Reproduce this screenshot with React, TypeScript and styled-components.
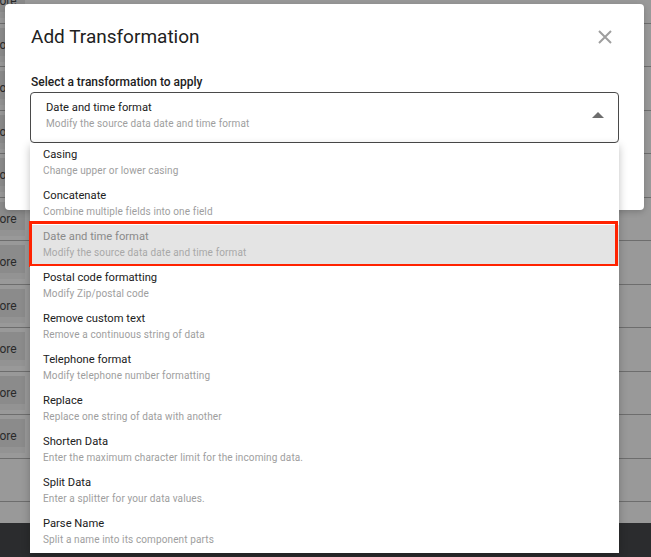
import styled, { createGlobalStyle } from "styled-components";

const GlobalStyle = createGlobalStyle`
  html, body {
    margin: 0;
    padding: 0;
  }
  body {
    font-family: Roboto, "Noto Sans", "Liberation Sans", sans-serif;
    -webkit-font-smoothing: antialiased;
  }
  * {
    box-sizing: border-box;
  }
`;

const transformations = [
  { title: "Casing", descr: "Change upper or lower casing" },
  { title: "Concatenate", descr: "Combine multiple fields into one field" },
  { title: "Date and time format", descr: "Modify the source data date and time format" },
  { title: "Postal code formatting", descr: "Modify Zip/postal code" },
  { title: "Remove custom text", descr: "Remove a continuous string of data" },
  { title: "Telephone format", descr: "Modify telephone number formatting" },
  { title: "Replace", descr: "Replace one string of data with another" },
  { title: "Shorten Data", descr: "Enter the maximum character limit for the incoming data." },
  { title: "Split Data", descr: "Enter a splitter for your data values." },
  { title: "Parse Name", descr: "Split a name into its component parts" },
];

const selected = "Date and time format";

const App = () => {
  return (
    <>
      <GlobalStyle />
      <Page>
        <Backdrop>
          <Rows>
            {Array.from({ length: 13 }).map((_, i) => (
              <Row key={i}>{i <= 10 && <MoreButton>More</MoreButton>}</Row>
            ))}
          </Rows>
          <Footer />
        </Backdrop>

        <Modal>
          <Header>
            <Title>Add Transformation</Title>
            <CloseButton aria-label="Close">
              <svg width="14" height="14" viewBox="0 0 14 14">
                <path d="M1 1 L13 13 M13 1 L1 13" stroke="#9e9e9e" strokeWidth="2" />
              </svg>
            </CloseButton>
          </Header>
          <Body>
            <Label>Select a transformation to apply</Label>
            <SelectWrap>
              <SelectBox>
                <div>
                  <OptionTitle>Date and time format</OptionTitle>
                  <OptionDescr>Modify the source data date and time format</OptionDescr>
                </div>
                <Caret />
              </SelectBox>
              <Menu>
                {transformations.map((t) => (
                  <MenuItem key={t.title} $active={t.title === selected}>
                    <OptionTitle>{t.title}</OptionTitle>
                    <OptionDescr>{t.descr}</OptionDescr>
                  </MenuItem>
                ))}
              </Menu>
            </SelectWrap>
          </Body>
        </Modal>
      </Page>
    </>
  );
};
export default App;

const Page = styled.div`
  position: relative;
  width: 651px;
  height: 557px;
  overflow: hidden;
  background: #999999;
`;

const Backdrop = styled.div`
  display: flex;
  flex-direction: column;
  height: 100%;
`;

const Rows = styled.div`
  flex: 1;
  overflow: hidden;
  display: flex;
  flex-direction: column;
  margin-top: -20px;
`;

const Row = styled.div`
  flex: 0 0 43.5px;
  border-bottom: 1px solid #6d6d6d;
  padding-top: 4px;
`;

const MoreButton = styled.div`
  width: 44px;
  height: 34px;
  margin-left: -19px;
  padding: 6px 0 0 8px;
  background: #8b8b8b;
  border-bottom: 6px solid #939393;
  color: #2a2a2a;
  font-size: 12px;
  line-height: 22px;
`;

const Footer = styled.div`
  flex: 0 0 34px;
  background: #2b2c2e;
`;

const Modal = styled.div`
  position: absolute;
  top: 4px;
  left: 5px;
  width: 639px;
  height: 206px;
  background: #fff;
  border-radius: 4px;
  box-shadow: 0 2px 6px rgba(0, 0, 0, 0.2);
`;

const Header = styled.div`
  display: flex;
  align-items: center;
  justify-content: space-between;
  padding: 21px 26px 0 26px;
`;

const Title = styled.h2`
  margin: 0;
  font-size: 19px;
  line-height: 24px;
  font-weight: 400;
  color: #212121;
`;

const CloseButton = styled.button`
  display: flex;
  align-items: center;
  justify-content: center;
  width: 24px;
  height: 24px;
  padding: 0;
  margin-right: 1px;
  margin-top: -1px;
  border: none;
  background: none;
  cursor: pointer;
`;

const Body = styled.div`
  padding: 0 25px;
  margin-top: 25px;
`;

const Label = styled.div`
  padding-left: 1px;
  font-size: 12px;
  line-height: 16px;
  font-weight: 500;
  color: #212121;
  margin-bottom: 2px;
`;

const SelectWrap = styled.div`
  position: relative;
`;

const SelectBox = styled.div`
  display: flex;
  align-items: center;
  justify-content: space-between;
  height: 51px;
  padding: 0 14px 4px 15px;
  border: 1px solid #4a4a4a;
  border-radius: 4px;
`;

const Caret = styled.span`
  width: 0;
  height: 0;
  border-left: 6px solid transparent;
  border-right: 6px solid transparent;
  border-bottom: 6px solid #6d6d6d;
  margin-bottom: 1px;
`;

const OptionTitle = styled.div`
  font-size: 11.2px;
  line-height: 16px;
  color: #212121;
`;

const OptionDescr = styled.div`
  font-size: 10px;
  line-height: 14px;
  letter-spacing: 0.12px;
  color: #9e9e9e;
  margin-top: 1px;
`;

const Menu = styled.div`
  position: absolute;
  top: 100%;
  left: 0;
  right: 0;
  background: #fff;
  border-radius: 0 0 4px 4px;
  box-shadow: 0 3px 8px rgba(0, 0, 0, 0.25);
  z-index: 2;
`;

const MenuItem = styled.div<{ $active?: boolean }>`
  position: relative;
  height: 41px;
  padding: 4px 13px 0;
  background: ${(p) => (p.$active ? "#e4e4e4" : "#fff")};

  ${OptionTitle} {
    color: ${(p) => (p.$active ? "#8a8a8a" : "#212121")};
  }
  ${OptionDescr} {
    color: ${(p) => (p.$active ? "#a8a8a8" : "#9e9e9e")};
  }

  &::after {
    content: "";
    display: ${(p) => (p.$active ? "block" : "none")};
    position: absolute;
    top: -4px;
    bottom: -1px;
    left: -1px;
    right: 1px;
    border: 3px solid #ff2200;
    pointer-events: none;
  }
`;
